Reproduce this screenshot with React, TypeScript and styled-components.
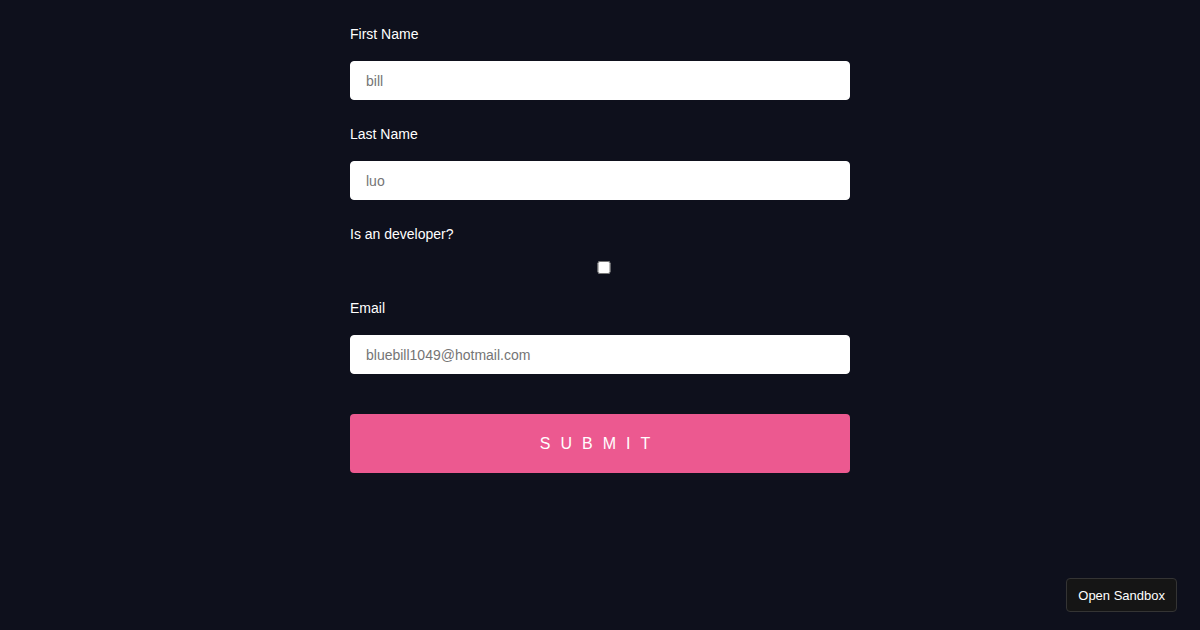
import React from "react";
import styled, { createGlobalStyle } from "styled-components";

const GlobalStyle = createGlobalStyle`
  html, body {
    margin: 0;
    padding: 0;
    background: #0e101c;
    font-family: "Liberation Sans", Arial, Helvetica, sans-serif;
  }
`;

const Page = styled.div`
  max-width: 600px;
  margin: 0 auto;
  min-height: 630px;
`;

const Form = styled.form`
  max-width: 500px;
  margin: 0 auto;
  padding-top: 0.1px;
`;

const Label = styled.label`
  display: block;
  line-height: 2;
  text-align: left;
  margin-top: 20px;
  margin-bottom: 13px;
  color: #ffffff;
  font-size: 14px;
  font-weight: 200;
`;

const Input = styled.input`
  display: block;
  box-sizing: border-box;
  width: 100%;
  height: 39px;
  border-radius: 4px;
  border: 1px solid #ffffff;
  padding: 10px 15px;
  margin-bottom: 10px;
  font-size: 14px;
  font-family: inherit;
  background: #ffffff;
  outline: none;

  &::placeholder {
    color: #757575;
  }
`;

const Checkbox = styled.input`
  display: block;
  box-sizing: border-box;
  width: 100%;
  height: 13px;
  margin: 3px 3px 10px 4px;
`;

const Submit = styled.button`
  display: block;
  box-sizing: border-box;
  width: 100%;
  height: 59px;
  margin-top: 40px;
  padding: 20px;
  border: none;
  border-radius: 4px;
  background: #ec5990;
  color: #ffffff;
  text-transform: uppercase;
  font-family: inherit;
  font-size: 16px;
  font-weight: 100;
  line-height: 19px;
  letter-spacing: 10px;
  cursor: pointer;
`;

const SandboxButton = styled.button`
  position: fixed;
  right: 23px;
  bottom: 18px;
  height: 34px;
  padding: 0 11px;
  border: 1px solid #343434;
  border-radius: 4px;
  background: #151515;
  color: #ffffff;
  font-family: "Liberation Sans", Arial, sans-serif;
  font-size: 13px;
  cursor: pointer;
`;

export default function App() {
  return (
    <Page>
      <GlobalStyle />
      <Form onSubmit={(e) => e.preventDefault()}>
        <Label>First Name</Label>
        <Input placeholder="bill" />
        <Label>Last Name</Label>
        <Input placeholder="luo" />
        <Label>Is an developer?</Label>
        <Checkbox type="checkbox" />
        <Label>Email</Label>
        <Input placeholder="bluebill1049@hotmail.com" />
        <Submit type="submit">Submit</Submit>
      </Form>
      <SandboxButton>Open Sandbox</SandboxButton>
    </Page>
  );
}
